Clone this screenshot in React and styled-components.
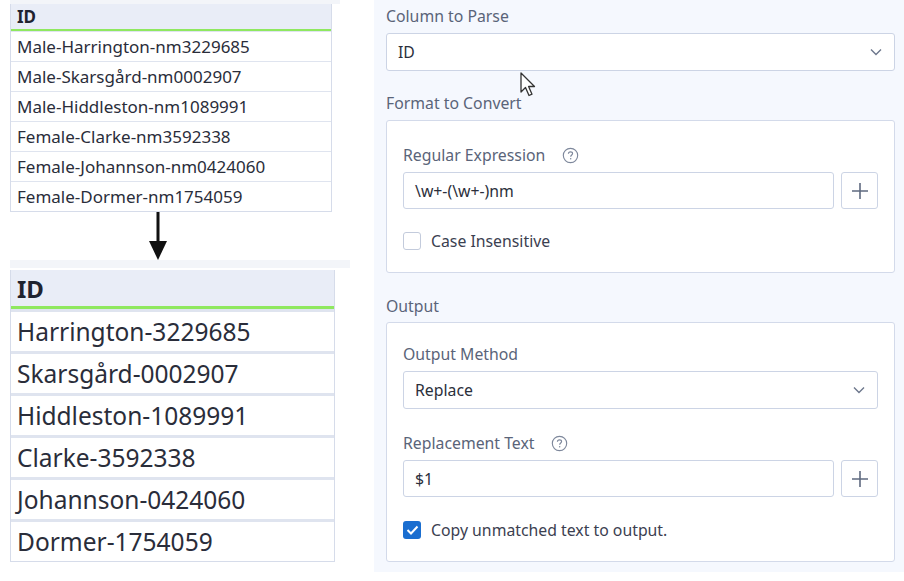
import React from "react"
import styled, { createGlobalStyle } from "styled-components"

const GlobalStyle = createGlobalStyle`
  html, body {
    margin: 0;
    padding: 0;
    background: #ffffff;
    font-family: "Noto Sans", "Open Sans", sans-serif;
  }
`

const before = [
  "Male-Harrington-nm3229685",
  "Male-Skarsgård-nm0002907",
  "Male-Hiddleston-nm1089991",
  "Female-Clarke-nm3592338",
  "Female-Johannson-nm0424060",
  "Female-Dormer-nm1754059",
]

const after = [
  "Harrington-3229685",
  "Skarsgård-0002907",
  "Hiddleston-1089991",
  "Clarke-3592338",
  "Johannson-0424060",
  "Dormer-1754059",
]

const Page = styled.div`
  display: flex;
  width: 904px;
  height: 581px;
  overflow: hidden;
`

const LeftColumn = styled.div`
  width: 374px;
  flex-shrink: 0;
  display: flex;
  flex-direction: column;
  padding-left: 10px;
  box-sizing: border-box;
`

const Strip = styled.div`
  height: ${(p) => p.h}px;
  width: ${(p) => p.w}px;
  background: #f3f5f9;
  margin-bottom: ${(p) => p.mb || 0}px;
`

const Table = styled.div`
  width: ${(p) => p.w}px;
  border: 1px solid #d6dcea;
  border-top: none;
  background: #fff;
`

const HeaderCell = styled.div`
  height: ${(p) => p.h}px;
  background: #e9edf7;
  border-bottom: ${(p) => p.line}px solid #8fe85f;
  display: flex;
  align-items: center;
  padding-left: 6px;
  font-weight: 700;
  font-size: ${(p) => p.size}px;
  color: #1f2330;
`

const Row = styled.div`
  height: ${(p) => p.h}px;
  display: flex;
  align-items: center;
  padding-left: 6px;
  font-size: ${(p) => p.size}px;
  color: #2a2d3a;
  border-top: ${(p) => p.gap}px solid #dfe4ef;
`

const ArrowWrap = styled.div`
  height: 48px;
  display: flex;
  padding-left: 138px;
`

const Panel = styled.div`
  flex: 1;
  background: #f5f8fe;
  padding: 6px 9px 0 12px;
  height: 572px;
  box-sizing: border-box;
  display: flex;
  flex-direction: column;
  position: relative;
  font-size: 15.8px;
`

const SectionLabel = styled.div`
  color: #5a6479;
  height: 20px;
  line-height: 20px;
  margin-bottom: ${(p) => p.mb || 7}px;
`

const Select = styled.div`
  height: 38px;
  background: #fff;
  border: 1px solid #ccd4e5;
  border-radius: 3px;
  box-sizing: border-box;
  display: flex;
  align-items: center;
  justify-content: space-between;
  padding: 0 12px 0 11px;
  color: #2b2f3b;
  margin-bottom: ${(p) => p.mb || 0}px;
`

const Card = styled.div`
  background: #fff;
  border: 1px solid #d3daea;
  border-radius: 3px;
  padding: ${(p) => p.pt}px 16px 0 16px;
  height: ${(p) => p.h}px;
  box-sizing: border-box;
  margin-bottom: ${(p) => p.mb || 0}px;
`

const FieldLabel = styled.div`
  display: flex;
  align-items: center;
  gap: 17px;
  color: #5a6479;
  height: 20px;
  margin-bottom: 7px;
`

const InputRow = styled.div`
  display: flex;
  gap: 7px;
  height: 37px;
`

const Input = styled.div`
  flex: 1;
  background: #fff;
  border: 1px solid #ccd4e5;
  border-radius: 3px;
  display: flex;
  align-items: center;
  padding-left: 11px;
  color: #2b2f3b;
`

const PlusButton = styled.div`
  width: 35px;
  border: 1px solid #ccd4e5;
  border-radius: 3px;
  display: flex;
  align-items: center;
  justify-content: center;
  background: #fff;
`

const CheckRow = styled.label`
  display: flex;
  align-items: center;
  gap: 10px;
  color: #3b4050;
  margin-top: ${(p) => p.mt}px;
`

const Box = styled.span`
  width: 18px;
  height: 18px;
  box-sizing: border-box;
  border-radius: 3px;
  border: ${(p) => (p.checked ? "none" : "1px solid #c3cbdc")};
  background: ${(p) => (p.checked ? "#1a6ed0" : "#fff")};
  display: flex;
  align-items: center;
  justify-content: center;
`

const Cursor = styled.svg`
  position: absolute;
  left: 146px;
  top: 72px;
`

const Chevron = () => (
  <svg width="12" height="8" viewBox="0 0 12 8">
    <path d="M1 1.5 L6 6.5 L11 1.5" fill="none" stroke="#6d778c" strokeWidth="1.4" />
  </svg>
)

const Help = () => (
  <svg width="17" height="17" viewBox="0 0 18 18">
    <circle cx="9" cy="9" r="7.6" fill="none" stroke="#7d879b" strokeWidth="1.2" />
    <path d="M6.8 7.2 C6.8 5.8 7.8 5.1 9 5.1 C10.3 5.1 11.2 5.9 11.2 7 C11.2 8.4 9.2 8.6 9.2 10.2" fill="none" stroke="#7d879b" strokeWidth="1.2" />
    <circle cx="9.2" cy="12.5" r="0.8" fill="#7d879b" />
  </svg>
)

const Plus = () => (
  <svg width="18" height="18" viewBox="0 0 18 18">
    <path d="M9 1 V17 M1 9 H17" stroke="#5f6a80" strokeWidth="1.6" />
  </svg>
)

const DataTable = ({ rows, headH, line, rowH, size, headSize, width, gap, firstGap }) => (
  <Table w={width}>
    <HeaderCell h={headH} line={line} size={headSize}>ID</HeaderCell>
    {rows.map((r, i) => (
      <Row key={r} h={rowH} size={size} gap={i === 0 ? firstGap : gap}>{r}</Row>
    ))}
  </Table>
)

export default function App() {
  return (
    <Page>
      <GlobalStyle />
      <LeftColumn>
        <Strip h={4} w={330} />
        <DataTable rows={before} width={320} headH={25} line={2} rowH={29} size={17} headSize={17} gap={1} firstGap={1} />
        <ArrowWrap>
          <svg width="20" height="48" viewBox="0 0 20 48">
            <rect x="8.5" y="0" width="3" height="30" fill="#111" />
            <path d="M1 29 L19 29 L10 48 Z" fill="#111" />
          </svg>
        </ArrowWrap>
        <Strip h={8} w={340} mb={2} />
        <DataTable rows={after} width={323} headH={36} line={3} rowH={39} size={24.5} headSize={24} gap={3} firstGap={3} />
      </LeftColumn>

      <Panel>
        <SectionLabel>Column to Parse</SectionLabel>
        <Select mb={22}>
          <span>ID</span>
          <Chevron />
        </Select>
        <SectionLabel mb={7}>Format to Convert</SectionLabel>
        <Card h={153} pt={24} mb={23}>
          <FieldLabel>
            Regular Expression <Help />
          </FieldLabel>
          <InputRow>
            <Input>\w+-(\w+-)nm</Input>
            <PlusButton><Plus /></PlusButton>
          </InputRow>
          <CheckRow mt={21}>
            <Box />
            Case Insensitive
          </CheckRow>
        </Card>
        <SectionLabel mb={6}>Output</SectionLabel>
        <Card h={240} pt={21}>
          <FieldLabel>Output Method</FieldLabel>
          <Select mb={24}>
            <span>Replace</span>
            <Chevron />
          </Select>
          <FieldLabel>
            Replacement Text <Help />
          </FieldLabel>
          <InputRow>
            <Input>$1</Input>
            <PlusButton><Plus /></PlusButton>
          </InputRow>
          <CheckRow mt={22}>
            <Box checked>
              <svg width="13" height="10" viewBox="0 0 13 10">
                <path d="M1.5 5 L5 8.5 L11.5 1.5" fill="none" stroke="#fff" strokeWidth="2" />
              </svg>
            </Box>
            Copy unmatched text to output.
          </CheckRow>
        </Card>
        <Cursor width="20" height="28" viewBox="0 0 20 28">
          <path d="M1 1 L1 20 L5.5 15.5 L9 23.5 L12 22.2 L8.6 14.5 L14.5 14.5 Z" fill="#fff" stroke="#333" strokeWidth="1.3" strokeLinejoin="round" />
        </Cursor>
      </Panel>
    </Page>
  )
}
